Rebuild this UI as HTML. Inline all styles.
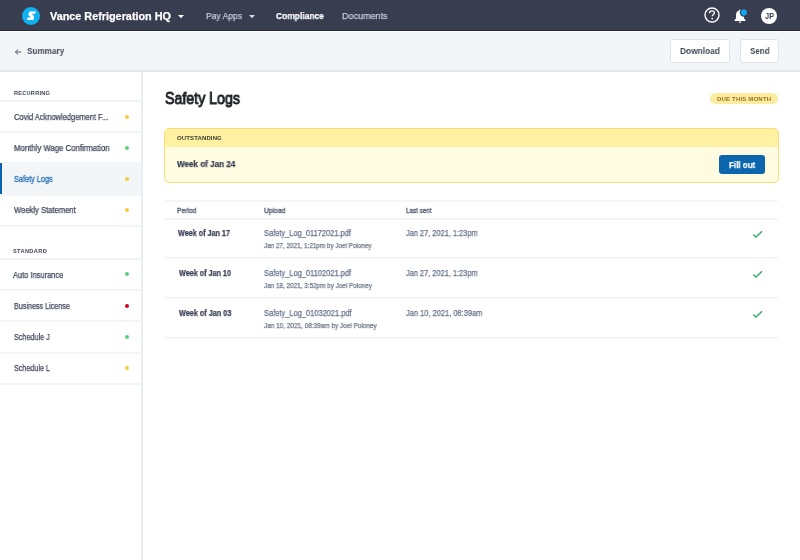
<!DOCTYPE html>
<html><head><meta charset="utf-8">
<style>
*{margin:0;padding:0;box-sizing:border-box}
html,body{width:800px;height:560px;overflow:hidden;background:#fff;font-family:"Liberation Sans",sans-serif}
.t{will-change:transform}
.a{position:absolute}
.t{position:absolute;white-space:nowrap;line-height:1;font-family:"Liberation Sans",sans-serif}
.hl{position:absolute;left:0;width:141px;height:2px;background:#f2f5f7}
.dot{position:absolute;width:4.4px;height:4.4px;border-radius:50%}
.btn{position:absolute;background:#fff;border:1px solid #dde3e9;border-radius:3px}
.tl{position:absolute;left:165px;width:613px;height:2px;background:#f3f5f8}
.y{background:#f6cb3c}.g{background:#5bd17d}.r{background:#d0021b}
</style></head><body>
<!-- nav -->
<div class="a" style="left:0;top:0;width:800px;height:30px;background:#383d50"></div>
<div class="a" style="left:0;top:30px;width:800px;height:1px;background:#262939"></div>
<div class="a" style="left:0;top:31px;width:800px;height:39px;background:#f3f6f8"></div>
<div class="a" style="left:0;top:31px;width:800px;height:1px;background:#fdfdfe"></div>
<div class="a" style="left:0;top:70px;width:800px;height:2px;background:#e3e8ec"></div>
<!-- logo -->
<svg class="a" style="left:22px;top:7px" width="18" height="18" viewBox="0 0 18 18">
<circle cx="9" cy="9" r="9" fill="#10b1f1"/>
<path d="M7.3 4.4 L13.9 4.4 L13.2 6.7 L9.7 6.7 L11.5 8.5 Q12.3 9.3 12.0 10.4 L11.4 12.9 L4.9 12.9 L5.6 10.6 L9.0 10.6 L7.0 8.7 Q6.2 7.9 6.5 6.9 Z" fill="#fff"/>
</svg>
<svg class="a" style="left:178px;top:14.5px" width="6" height="4" viewBox="0 0 6 4"><path d="M0 0H6L3 3.2Z" fill="#fff"/></svg>
<svg class="a" style="left:249px;top:14.6px" width="6" height="4" viewBox="0 0 6 4"><path d="M0 0H6L3 3.2Z" fill="#d5d8e0"/></svg>
<!-- right icons -->
<svg class="a" style="left:703.6px;top:7.2px" width="16" height="16" viewBox="0 0 16 16">
<circle cx="8" cy="8" r="7" fill="none" stroke="#fff" stroke-width="1.4"/>
<path d="M5.5 6.2 C5.5 4.7 6.6 3.9 8 3.9 C9.5 3.9 10.4 4.8 10.4 5.9 C10.4 7.4 8.2 7.5 8.2 9.3" fill="none" stroke="#fff" stroke-width="1.4"/>
<circle cx="8.2" cy="11.6" r="0.9" fill="#fff"/>
</svg>
<svg class="a" style="left:733px;top:8px" width="16" height="16" viewBox="0 0 16 16">
<path d="M6.1 2.4 C6.3 1.2 7.7 1.2 7.9 2.4 C10.2 3 11 4.9 11 7.2 L11 10.2 L12.9 12.9 L1.1 12.9 L3 10.2 L3 7.2 C3 4.9 3.8 3 6.1 2.4 Z" fill="#fff"/>
<path d="M5.7 13.6 H8.3 C8.2 14.5 7.6 15 7 15 C6.4 15 5.8 14.5 5.7 13.6Z" fill="#fff"/>
<circle cx="10.9" cy="4.6" r="4.2" fill="#383d50"/>
<circle cx="10.9" cy="4.6" r="3.05" fill="#0ba9f3"/>
</svg>
<div class="a" style="left:761px;top:7.6px;width:16.2px;height:16.2px;border-radius:50%;background:#fff"></div>
<!-- subheader -->
<svg class="a" style="left:14px;top:47.5px" width="8" height="8" viewBox="0 0 8 8"><path d="M7.2 4H1.4M4 1.4L1.4 4L4 6.6" fill="none" stroke="#4a5064" stroke-width="0.95"/></svg>
<div class="btn" style="left:670px;top:39px;width:60px;height:24px"></div>
<div class="btn" style="left:740px;top:39px;width:39px;height:24px"></div>
<!-- sidebar -->
<div class="a" style="left:141px;top:72px;width:2px;height:488px;background:#e9eef1"></div>
<div class="hl" style="top:100px"></div>
<div class="dot y" style="left:124.8px;top:114.8px"></div>
<div class="hl" style="top:131px"></div>
<div class="dot g" style="left:124.8px;top:145.8px"></div>
<div class="hl" style="top:162px"></div>
<div class="a" style="left:0;top:163px;width:141px;height:31px;background:#f3f6f8"></div>
<div class="a" style="left:0;top:163px;width:2px;height:31px;background:#0b63b0"></div>
<div class="dot y" style="left:124.8px;top:176.8px"></div>
<div class="hl" style="top:194px"></div>
<div class="dot y" style="left:124.8px;top:207.8px"></div>
<div class="hl" style="top:225px"></div>
<div class="hl" style="top:257.5px"></div>
<div class="dot g" style="left:124.8px;top:272px"></div>
<div class="hl" style="top:288.8px"></div>
<div class="dot r" style="left:124.8px;top:303.5px"></div>
<div class="hl" style="top:320px"></div>
<div class="dot g" style="left:124.8px;top:334.8px"></div>
<div class="hl" style="top:351.5px"></div>
<div class="dot y" style="left:124.8px;top:366px"></div>
<div class="hl" style="top:382.6px"></div>
<!-- main -->
<div class="a" style="left:710px;top:93px;width:68px;height:11px;border-radius:6px;background:#fdec9f"></div>
<div class="a" style="left:164px;top:128px;width:615px;height:55px;border:1px solid #f8dd7c;border-radius:5px;background:#fffbe1;overflow:hidden">
<div class="a" style="left:0;top:0;width:613px;height:18px;background:#fef1a2"></div>
</div>
<div class="a" style="left:719px;top:155px;width:46px;height:19px;border-radius:3px;background:#0b66ad"></div>
<!-- table -->
<div class="tl" style="top:200px"></div>
<div class="tl" style="top:218px"></div>
<svg class="a" style="left:752px;top:230px" width="11" height="9" viewBox="0 0 11 9"><path d="M1.2 4.4L3.9 7.1L10 1.2" fill="none" stroke="#22a55b" stroke-width="1.3"/></svg>
<div class="tl" style="top:257px"></div>
<svg class="a" style="left:752px;top:270px" width="11" height="9" viewBox="0 0 11 9"><path d="M1.2 4.4L3.9 7.1L10 1.2" fill="none" stroke="#22a55b" stroke-width="1.3"/></svg>
<div class="tl" style="top:297px"></div>
<svg class="a" style="left:752px;top:310px" width="11" height="9" viewBox="0 0 11 9"><path d="M1.2 4.4L3.9 7.1L10 1.2" fill="none" stroke="#22a55b" stroke-width="1.3"/></svg>
<div class="tl" style="top:337px"></div>
<div class="t" style="left:49.60px;top:11.10px;font-size:10.5px;font-weight:700;color:#fff;transform:scaleX(1.0316);transform-origin:0 0;-webkit-text-stroke:0.25px currentColor;">Vance Refrigeration HQ</div>
<div class="t" style="left:206.00px;top:11.00px;font-size:9.5px;font-weight:400;color:#c6c9d3;transform:scaleX(0.9000);transform-origin:0 0;-webkit-text-stroke:0.25px currentColor;">Pay Apps</div>
<div class="t" style="left:276.40px;top:11.00px;font-size:9.5px;font-weight:700;color:#fff;transform:scaleX(0.8889);transform-origin:0 0;-webkit-text-stroke:0.25px currentColor;">Compliance</div>
<div class="t" style="left:342.40px;top:11.00px;font-size:9.5px;font-weight:400;color:#c6c9d3;transform:scaleX(0.9448);transform-origin:0 0;-webkit-text-stroke:0.25px currentColor;">Documents</div>
<div class="t" style="left:765.00px;top:11.80px;font-size:8.8px;font-weight:700;color:#3d4154;transform:scaleX(0.8364);transform-origin:0 0;">JP</div>
<div class="t" style="left:26.90px;top:46.10px;font-size:9.5px;font-weight:700;color:#42485a;transform:scaleX(0.8605);transform-origin:0 0;">Summary</div>
<div class="t" style="left:680.40px;top:46.10px;font-size:9.5px;font-weight:700;color:#42485a;transform:scaleX(0.8800);transform-origin:0 0;">Download</div>
<div class="t" style="left:749.75px;top:46.10px;font-size:9.5px;font-weight:700;color:#42485a;transform:scaleX(0.8413);transform-origin:0 0;">Send</div>
<div class="t" style="left:13.75px;top:90.75px;font-size:5.6px;font-weight:700;color:#40465a;letter-spacing:0.250px;">RECURRING</div>
<div class="t" style="left:14.00px;top:112.70px;font-size:8.4px;font-weight:400;color:#40465a;transform:scaleX(0.8943);transform-origin:0 0;-webkit-text-stroke:0.25px currentColor;">Covid Acknowledgement F...</div>
<div class="t" style="left:14.00px;top:143.80px;font-size:8.4px;font-weight:400;color:#40465a;transform:scaleX(0.9282);transform-origin:0 0;-webkit-text-stroke:0.25px currentColor;">Monthly Wage Confirmation</div>
<div class="t" style="left:13.70px;top:174.80px;font-size:8.4px;font-weight:400;color:#2a73b5;transform:scaleX(0.8750);transform-origin:0 0;-webkit-text-stroke:0.35px currentColor;">Safety Logs</div>
<div class="t" style="left:13.70px;top:205.90px;font-size:8.4px;font-weight:400;color:#40465a;transform:scaleX(0.9103);transform-origin:0 0;-webkit-text-stroke:0.25px currentColor;">Weekly Statement</div>
<div class="t" style="left:13.40px;top:248.60px;font-size:5.6px;font-weight:700;color:#40465a;letter-spacing:0.386px;">STANDARD</div>
<div class="t" style="left:13.40px;top:270.50px;font-size:8.4px;font-weight:400;color:#40465a;transform:scaleX(0.8912);transform-origin:0 0;-webkit-text-stroke:0.25px currentColor;">Auto Insurance</div>
<div class="t" style="left:13.80px;top:302.00px;font-size:8.4px;font-weight:400;color:#40465a;transform:scaleX(0.8569);transform-origin:0 0;-webkit-text-stroke:0.25px currentColor;">Business License</div>
<div class="t" style="left:13.80px;top:333.00px;font-size:8.4px;font-weight:400;color:#40465a;transform:scaleX(0.8634);transform-origin:0 0;-webkit-text-stroke:0.25px currentColor;">Schedule J</div>
<div class="t" style="left:13.80px;top:363.90px;font-size:8.4px;font-weight:400;color:#40465a;transform:scaleX(0.8571);transform-origin:0 0;-webkit-text-stroke:0.25px currentColor;">Schedule L</div>
<div class="t" style="left:165.00px;top:90.50px;font-size:15.7px;font-weight:400;color:#222428;transform:scaleX(0.9048);transform-origin:0 0;-webkit-text-stroke:0.95px currentColor;">Safety Logs</div>
<div class="t" style="left:717.00px;top:95.80px;font-size:6px;font-weight:700;color:#9a7320;letter-spacing:0.185px;">DUE THIS MONTH</div>
<div class="t" style="left:177.00px;top:135.30px;font-size:6px;font-weight:700;color:#3d3b32;letter-spacing:0.120px;">OUTSTANDING</div>
<div class="t" style="left:177.20px;top:160.00px;font-size:8.5px;font-weight:700;color:#3b4056;transform:scaleX(0.9516);transform-origin:0 0;-webkit-text-stroke:0.25px currentColor;">Week of Jan 24</div>
<div class="t" style="left:728.90px;top:161.00px;font-size:9.2px;font-weight:700;color:#fff;transform:scaleX(0.8733);transform-origin:0 0;-webkit-text-stroke:0.25px currentColor;">Fill out</div>
<div class="t" style="left:177.00px;top:206.70px;font-size:7px;font-weight:400;color:#5a6577;transform:scaleX(0.9600);transform-origin:0 0;-webkit-text-stroke:0.35px currentColor;">Period</div>
<div class="t" style="left:264.00px;top:206.70px;font-size:7px;font-weight:400;color:#5a6577;transform:scaleX(0.9659);transform-origin:0 0;-webkit-text-stroke:0.35px currentColor;">Upload</div>
<div class="t" style="left:405.60px;top:206.70px;font-size:7px;font-weight:400;color:#5a6577;transform:scaleX(0.8966);transform-origin:0 0;-webkit-text-stroke:0.35px currentColor;">Last sent</div>
<div class="t" style="left:178.30px;top:228.90px;font-size:8.3px;font-weight:700;color:#3b4056;transform:scaleX(0.8683);transform-origin:0 0;-webkit-text-stroke:0.25px currentColor;">Week of Jan 17</div>
<div class="t" style="left:264.40px;top:229.20px;font-size:8.5px;font-weight:400;color:#65718a;transform:scaleX(0.8760);transform-origin:0 0;-webkit-text-stroke:0.25px currentColor;">Safety_Log_01172021.pdf</div>
<div class="t" style="left:264.40px;top:243.20px;font-size:6.9px;font-weight:400;color:#6c7689;transform:scaleX(0.9169);transform-origin:0 0;-webkit-text-stroke:0.25px currentColor;">Jan 27, 2021, 1:21pm by Joel Poloney</div>
<div class="t" style="left:405.80px;top:229.00px;font-size:8.5px;font-weight:400;color:#65718a;transform:scaleX(0.8695);transform-origin:0 0;-webkit-text-stroke:0.25px currentColor;">Jan 27, 2021, 1:23pm</div>
<div class="t" style="left:178.50px;top:268.90px;font-size:8.3px;font-weight:700;color:#3b4056;transform:scaleX(0.8683);transform-origin:0 0;-webkit-text-stroke:0.25px currentColor;">Week of Jan 10</div>
<div class="t" style="left:264.40px;top:269.20px;font-size:8.5px;font-weight:400;color:#65718a;transform:scaleX(0.8790);transform-origin:0 0;-webkit-text-stroke:0.25px currentColor;">Safety_Log_01102021.pdf</div>
<div class="t" style="left:264.40px;top:283.20px;font-size:6.9px;font-weight:400;color:#6c7689;transform:scaleX(0.9203);transform-origin:0 0;-webkit-text-stroke:0.25px currentColor;">Jan 18, 2021, 3:52pm by Joel Poloney</div>
<div class="t" style="left:405.80px;top:269.00px;font-size:8.5px;font-weight:400;color:#65718a;transform:scaleX(0.8695);transform-origin:0 0;-webkit-text-stroke:0.25px currentColor;">Jan 27, 2021, 1:23pm</div>
<div class="t" style="left:178.75px;top:308.90px;font-size:8.3px;font-weight:700;color:#3b4056;transform:scaleX(0.8750);transform-origin:0 0;-webkit-text-stroke:0.25px currentColor;">Week of Jan 03</div>
<div class="t" style="left:264.40px;top:309.20px;font-size:8.5px;font-weight:400;color:#65718a;transform:scaleX(0.8790);transform-origin:0 0;-webkit-text-stroke:0.25px currentColor;">Safety_Log_01032021.pdf</div>
<div class="t" style="left:264.40px;top:323.20px;font-size:6.9px;font-weight:400;color:#6c7689;transform:scaleX(0.9314);transform-origin:0 0;-webkit-text-stroke:0.25px currentColor;">Jan 10, 2021, 08:39am by Joel Poloney</div>
<div class="t" style="left:405.80px;top:309.00px;font-size:8.5px;font-weight:400;color:#65718a;transform:scaleX(0.8782);transform-origin:0 0;-webkit-text-stroke:0.25px currentColor;">Jan 10, 2021, 08:39am</div>
</body></html>
